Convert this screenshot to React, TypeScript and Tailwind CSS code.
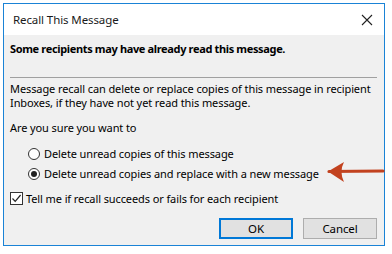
export default function App() {
  return (
    <div className="relative w-[392px] h-[254px] bg-white font-['Noto_Sans',sans-serif] text-[11px] tracking-[-0.1px] text-black">
      {/* Dialog window */}
      <div className="ml-[3px] pt-[3px]">
        <div className="w-[382px] h-[243px] border border-[#1a83d6] bg-[#f0f0f0] flex flex-col">
          {/* Title bar */}
          <div className="h-[31px] bg-white flex items-center justify-between pl-[9px] pr-[10px]">
            <span className="text-[11.5px] text-[#1a1a1a]">Recall This Message</span>
            <svg width="12" height="12" viewBox="0 0 12 12" className="mr-[1px]">
              <path d="M1 1 L11 11 M11 1 L1 11" stroke="#222" strokeWidth="1.1" />
            </svg>
          </div>

          {/* Body */}
          <div className="flex-1 px-[6px] pt-[6px] whitespace-nowrap">
            <p className="font-bold leading-[16px] tracking-[-0.35px]">Some recipients may have already read this message.</p>
            <div className="mt-[20px] h-px bg-[#a0a0a0] mr-[1px]" />
            <p className="mt-[4px] leading-[13.5px]">
              Message recall can delete or replace copies of this message in recipient
              <br />
              Inboxes, if they have not yet read this message.
            </p>
            <p className="mt-[12px] leading-[13px]">Are you sure you want to</p>

            <div className="mt-[13px] pl-[18px] flex flex-col gap-[7px]">
              <label className="flex items-center gap-[4px] leading-[13px]">
                <span className="w-[12px] h-[12px] rounded-full border border-[#333] bg-white" />
                Delete unread copies of this message
              </label>
              <label className="flex items-center gap-[4px] leading-[13px]">
                <span className="w-[12px] h-[12px] rounded-full border border-[#333] bg-white flex items-center justify-center">
                  <span className="w-[6px] h-[6px] rounded-full bg-[#222]" />
                </span>
                Delete unread copies and replace with a new message
              </label>
            </div>

            <label className="mt-[12px] flex items-center gap-[3px] leading-[13px]">
              <span className="w-[13px] h-[13px] border border-[#333] bg-white flex items-center justify-center">
                <svg width="11" height="11" viewBox="0 0 11 11">
                  <path d="M1.5 5.5 L4.2 8.4 L9.6 2" stroke="#222" strokeWidth="1.2" fill="none" />
                </svg>
              </span>
              Tell me if recall succeeds or fails for each recipient
            </label>

            <div className="mt-[13px] flex justify-end gap-[10px] pr-[1px]">
              <button className="w-[74px] h-[21px] bg-[#e1e1e1] border-2 border-[#0078d7] text-[11.5px] leading-none">
                OK
              </button>
              <button className="w-[74px] h-[21px] bg-[#e1e1e1] border border-[#adadad] text-[11.5px] leading-none">
                Cancel
              </button>
            </div>
          </div>
        </div>
      </div>

      {/* Annotation arrow */}
      <svg className="absolute left-[327px] top-[161px]" width="58" height="22" viewBox="0 0 58 22">
        <path d="M2 10.5 L56 10" stroke="#c2421f" strokeWidth="3.2" strokeLinecap="round" fill="none" />
        <path d="M1 10.5 L17 1 Q12 10.5 17 21 Z" fill="#c2421f" />
      </svg>
    </div>
  );
}
